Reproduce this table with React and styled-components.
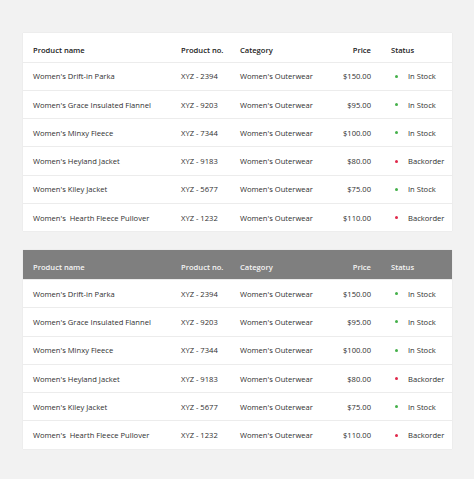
import React from 'react';
import styled, { createGlobalStyle } from 'styled-components';

const GlobalStyle = createGlobalStyle`
	body {
		margin: 0;
		background: #f2f2f2;
		font-family: "Open Sans", "Liberation Sans", sans-serif;
	}
`;

const products = [
	{ name: "Women's Drift-in Parka", no: 'XYZ - 2394', cat: "Women's Outerwear", price: '$150.00', inStock: true },
	{ name: "Women's Grace Insulated Flannel", no: 'XYZ - 9203', cat: "Women's Outerwear", price: '$95.00', inStock: true },
	{ name: "Women's Minxy Fleece", no: 'XYZ - 7344', cat: "Women's Outerwear", price: '$100.00', inStock: true },
	{ name: "Women's Heyland Jacket", no: 'XYZ - 9183', cat: "Women's Outerwear", price: '$80.00', inStock: false },
	{ name: "Women's Kiley Jacket", no: 'XYZ - 5677', cat: "Women's Outerwear", price: '$75.00', inStock: true },
	{ name: "Women's  Hearth Fleece Pullover", no: 'XYZ - 1232', cat: "Women's Outerwear", price: '$110.00', inStock: false },
];

const Page = styled.div`
	display: flex;
	flex-direction: column;
	gap: 19px;
	padding: 33px 0 30px 23px;
	min-height: 479px;
	box-sizing: border-box;
`;

const Table = styled.div`
	width: 429px;
	background: #fff;
	box-shadow: 0 0 1px rgba(0, 0, 0, 0.12);
`;

const Row = styled.div`
	display: grid;
	grid-template-columns: 148px 59px 71px 60px 1fr;
	align-items: center;
	height: 28.3px;
	padding-left: 10px;
	font-size: 7.6px;
	color: #2f2f2f;
	white-space: pre;
	border-top: 1px solid #ececec;
	box-sizing: border-box;
`;

const HeaderRow = styled(Row)`
	border-top: none;
	height: 28.6px;
	padding-top: 5px;
	font-weight: 600;
	color: ${(p) => (p.$dark ? '#f4f4f4' : '#222')};
	background: ${(p) => (p.$dark ? '#7f7f7f' : '#fff')};
`;

const Price = styled.div`
	text-align: right;
`;

const Status = styled.div`
	display: flex;
	align-items: center;
	padding-left: 20px;
`;

const Dot = styled.span`
	flex: none;
	width: 3px;
	height: 3px;
	border-radius: 50%;
	margin: 0 10px 0 4px;
	background: ${(p) => (p.$ok ? '#45b04a' : '#e0284a')};
`;

const ProductTable = ({ dark }) => (
	<Table>
		<HeaderRow $dark={dark}>
			<div>Product name</div>
			<div>Product no.</div>
			<div>Category</div>
			<Price>Price</Price>
			<Status>Status</Status>
		</HeaderRow>
		{products.map((p) => (
			<Row key={p.no}>
				<div>{p.name}</div>
				<div>{p.no}</div>
				<div>{p.cat}</div>
				<Price>{p.price}</Price>
				<Status>
					<Dot $ok={p.inStock} />
					{p.inStock ? 'In Stock' : 'Backorder'}
				</Status>
			</Row>
		))}
	</Table>
);

export default function App() {
	return (
		<>
			<GlobalStyle />
			<Page>
				<ProductTable />
				<ProductTable dark />
			</Page>
		</>
	);
}
